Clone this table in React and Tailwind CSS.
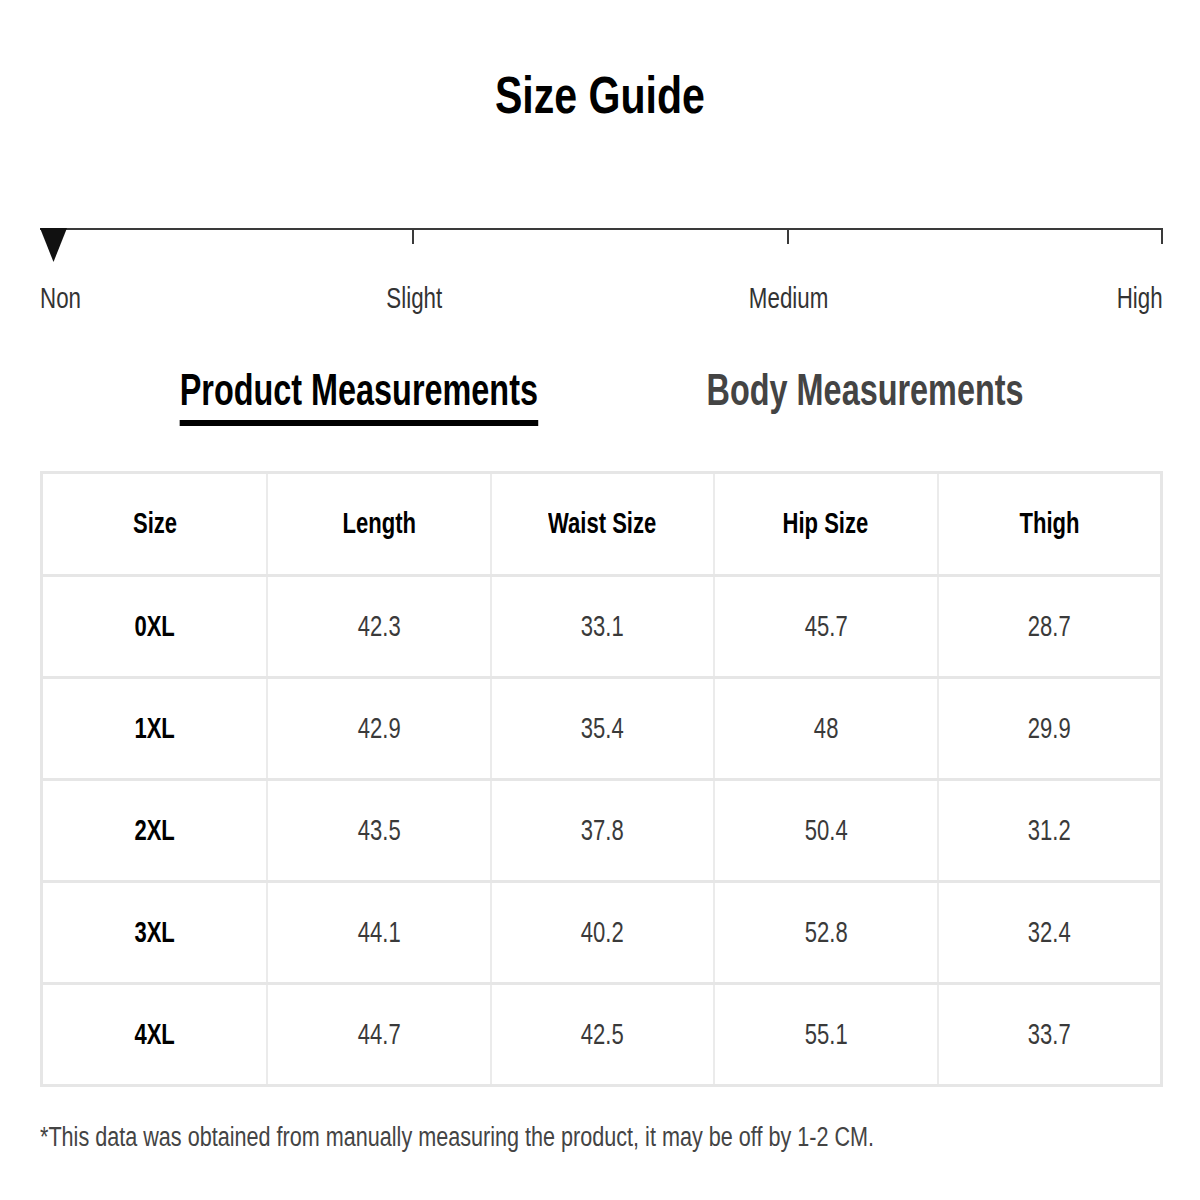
const rows = [
  ['0XL', '42.3', '33.1', '45.7', '28.7'],
  ['1XL', '42.9', '35.4', '48', '29.9'],
  ['2XL', '43.5', '37.8', '50.4', '31.2'],
  ['3XL', '44.1', '40.2', '52.8', '32.4'],
  ['4XL', '44.7', '42.5', '55.1', '33.7'],
];

const headers = ['Size', 'Length', 'Waist Size', 'Hip Size', 'Thigh'];

// no narrow font installed, so text is squeezed horizontally to mimic Arial Narrow
export default function App() {
  return (
    <div className="w-[1200px] h-[1200px] bg-white px-[40px] pt-[64px] text-[#222]" style={{ fontFamily: '"Liberation Sans", Arial, sans-serif' }}>
      <h1 className="flex justify-center text-[52px] leading-[62px] font-bold text-black">
        <span className="inline-block scale-x-[0.79]">Size Guide</span>
      </h1>

      {/* stretch scale */}
      <div className="mt-[102px] w-[1123px] relative">
        <div className="flex h-[16px] border-t-2 border-[#3a3a3a]">
          <div className="flex-1 border-r-2 border-[#3a3a3a]" />
          <div className="flex-1 border-r-2 border-[#3a3a3a]" />
          <div className="flex-1 border-r-2 border-[#3a3a3a]" />
        </div>
        <svg width="27" height="34" viewBox="0 0 27 34" className="absolute left-0 top-0">
          <polygon points="0,0 27,0 13.5,34" fill="#111" />
        </svg>
        <div className="flex justify-between text-[29px] leading-[36px] text-[#333] mt-[36px]">
          <div className="w-0 flex">
            <span className="inline-block origin-left scale-x-[0.77]">Non</span>
          </div>
          <div className="w-0 flex justify-center">
            <span className="inline-block scale-x-[0.77]">Slight</span>
          </div>
          <div className="w-0 flex justify-center">
            <span className="inline-block scale-x-[0.77]">Medium</span>
          </div>
          <div className="w-0 flex justify-end">
            <span className="inline-block origin-right scale-x-[0.77]">High</span>
          </div>
        </div>
      </div>

      {/* tabs */}
      <div className="flex mt-[48px] h-[92px]">
        <div className="w-[638px] flex justify-center">
          <div className="inline-flex flex-col scale-x-[0.72]">
            <span className="text-[45px] leading-[52px] font-bold text-black whitespace-nowrap">Product Measurements</span>
            <div className="mt-[4px] h-[6px] w-full bg-black" />
          </div>
        </div>
        <div className="w-[374px] flex justify-center">
          <span className="inline-block scale-x-[0.72] text-[45px] leading-[52px] font-bold text-[#444] whitespace-nowrap">Body Measurements</span>
        </div>
      </div>

      {/* table */}
      <div className="mt-[15px] w-[1123px] border-[3px] border-[#e6e6e6]">
        <div className="grid grid-cols-5 h-[100px] text-[29px] font-bold text-black">
          {headers.map((h, i) => (
            <div key={h} className={`h-full flex items-center justify-center ${i > 0 ? 'border-l-2 border-[#ebebeb]' : ''}`}>
              <span className="inline-block scale-x-[0.76] whitespace-nowrap">{h}</span>
            </div>
          ))}
        </div>
        {rows.map((r) => (
          <div key={r[0]} className="grid grid-cols-5 h-[102px] border-t-[3px] border-[#e6e6e6] text-[29px]">
            {r.map((c, i) => (
              <div key={i} className={`h-full flex items-center justify-center ${i === 0 ? 'font-bold text-black' : 'border-l-2 border-[#ebebeb] text-[#3a3a3a]'}`}>
                <span className="inline-block scale-x-[0.76]">{c}</span>
              </div>
            ))}
          </div>
        ))}
      </div>

      <p className="mt-[33px] text-[27px] leading-[34px] text-[#444] whitespace-nowrap">
        <span className="inline-block origin-left scale-x-[0.8]">*This data was obtained from manually measuring the product, it may be off by 1-2 CM.</span>
      </p>
    </div>
  );
}
